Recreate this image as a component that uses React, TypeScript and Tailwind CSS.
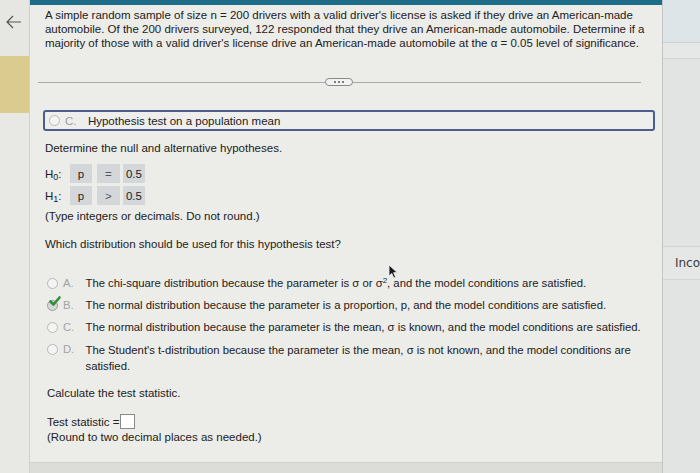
import React from "react";

const font = "font-['Liberation_Sans',Arial,sans-serif]";

const Radio = ({ checked = false }: { checked?: boolean }) => (
  <span className="relative inline-flex w-[11px] h-[11px] shrink-0">
    <span className={`w-[11px] h-[11px] rounded-full border ${checked ? "border-[#9a9a9a] bg-[#d8d8d8]" : "border-[#b9b9b9] bg-[#f4f4f2]"}`} />
    {checked && (
      <svg className="absolute -top-[4px] left-[2px]" width="12" height="11" viewBox="0 0 12 11">
        <path d="M1.5 5.5 L4.5 8.5 L10.5 1.5" fill="none" stroke="#2f8f3a" strokeWidth="2.6" strokeLinecap="round" strokeLinejoin="round" />
      </svg>
    )}
  </span>
);

const Option = ({ letter, checked, children }: { letter: string; checked?: boolean; children: React.ReactNode }) => (
  <div className="flex items-start gap-[5px] pl-[2px]">
    <div className="h-[14px] flex items-center">
      <Radio checked={checked} />
    </div>
    <span className="w-[18px] text-[#a3a3a3]">{letter}.</span>
    <div className="w-[570px]">{children}</div>
  </div>
);

const Cell = ({ children, w }: { children: React.ReactNode; w: string }) => (
  <span className={`${w} h-[19px] bg-[#d3d7da] flex items-center justify-center`}>{children}</span>
);

export default function App() {
  return (
    <div className={`w-[700px] h-[473px] flex overflow-hidden bg-[#e3e5e5] text-[#222] ${font}`}>
      {/* left rail */}
      <div className="w-[30px] flex flex-col border-r border-[#cfcfcc]">
        <div className="h-[56px] bg-[#e6e6e3] flex items-start justify-center pt-[14px]">
          <svg width="18" height="16" viewBox="0 0 18 16">
            <path d="M16 8 H2 M8 2 L2 8 L8 14" fill="none" stroke="#555" strokeWidth="1.2" />
          </svg>
        </div>
        <div className="h-[57px] bg-[#dccb8e]" />
        <div className="flex-1 bg-[#e8e8e5]" />
      </div>

      {/* main panel */}
      <div className="w-[632px] flex flex-col bg-[#ecece9] text-[11.5px] leading-[14px]">
        <div className="h-[5px] bg-[#1d6d89]" />
        <div className="flex-1 flex flex-col pl-[15px] pr-[20px]">
          <p className="mt-[3px] whitespace-nowrap text-[11.5px] leading-[14px]">
            A simple random sample of size n = 200 drivers with a valid driver's license is asked if they drive an American-made
            <br />
            automobile. Of the 200 drivers surveyed, 122 responded that they drive an American-made automobile. Determine if a
            <br />
            majority of those with a valid driver's license drive an American-made automobile at the α = 0.05 level of significance.
          </p>

          <div className="mt-[28px] -ml-[7px] w-[603px] flex items-center">
            <div className="flex-1 h-[1px] bg-[#a9a9a7]" />
            <span className="w-[28px] h-[8px] rounded-full border border-[#8a8a8a] bg-[#f2f2f0] flex items-center justify-center gap-[2px]">
              <span className="w-[2px] h-[2px] rounded-full bg-[#555]" />
              <span className="w-[2px] h-[2px] rounded-full bg-[#555]" />
              <span className="w-[2px] h-[2px] rounded-full bg-[#555]" />
            </span>
            <div className="flex-1 h-[1px] bg-[#a9a9a7]" />
          </div>

          <div className="mt-[24px] -ml-[2px] w-[612px] h-[21px] border-2 border-[#4b5e8e] rounded-[3px] flex items-center gap-[5px] pl-[4px] bg-[#eeeeec]">
            <Radio />
            <span className="w-[18px] text-[#9c9c9c]">C.</span>
            <span>Hypothesis test on a population mean</span>
          </div>

          <p className="mt-[10px]">Determine the null and alternative hypotheses.</p>

          <div className="mt-[9px] flex flex-col gap-[3px]">
            <div className="flex items-center">
              <span className="w-[25px]">H<sub className="text-[9px]">0</sub>:</span>
              <Cell w="w-[22px]">p</Cell>
              <span className="w-[5px]" />
              <Cell w="w-[23px]"><span className="text-[#555]">=</span></Cell>
              <span className="w-[3px]" />
              <Cell w="w-[22px]">0.5</Cell>
            </div>
            <div className="flex items-center">
              <span className="w-[25px]">H<sub className="text-[9px]">1</sub>:</span>
              <Cell w="w-[22px]">p</Cell>
              <span className="w-[5px]" />
              <Cell w="w-[23px]"><span className="text-[#555]">&gt;</span></Cell>
              <span className="w-[3px]" />
              <Cell w="w-[22px]">0.5</Cell>
            </div>
          </div>
          <p className="mt-[4px]">(Type integers or decimals. Do not round.)</p>

          <p className="mt-[14px]">Which distribution should be used for this hypothesis test?</p>

          <div className="mt-[25px] flex flex-col gap-[8px] text-[11.3px]">
            <Option letter="A">
              <span className="relative">
                The chi-square distribution because the parameter is σ or σ<sup className="text-[8px]">2</sup>, and the model conditions are satisfied.
                <svg className="absolute left-[303px] -top-[13px]" width="10" height="15" viewBox="0 0 10 15">
                  <path d="M1 1 L1 12 L3.8 9.4 L5.8 14 L7.6 13.2 L5.6 8.7 L9.2 8.6 Z" fill="#1a1a1a" stroke="#f2f2f2" strokeWidth="0.8" />
                </svg>
              </span>
            </Option>
            <Option letter="B" checked>
              The normal distribution because the parameter is a proportion, p, and the model conditions are satisfied.
            </Option>
            <Option letter="C">
              The normal distribution because the parameter is the mean, σ is known, and the model conditions are satisfied.
            </Option>
            <Option letter="D">
              <span className="leading-[16px]">
                The Student's t-distribution because the parameter is the mean, σ is not known, and the model conditions are
                <br />
                satisfied.
              </span>
            </Option>
          </div>

          <p className="mt-[12px] pl-[2px]">Calculate the test statistic.</p>
          <div className="mt-[14px] pl-[2px] flex items-center">
            <span>Test statistic =</span>
            <span className="ml-[1px] w-[15px] h-[15px] border border-[#8a8a8a] bg-white" />
          </div>
          <p className="mt-[1px] pl-[2px]">(Round to two decimal places as needed.)</p>
        </div>
        <div className="h-[11px] bg-[#dcdcd9] border-t border-[#d0d0cd]" />
      </div>

      {/* right area */}
      <div className="flex-1 flex flex-col border-l border-[#c4c6c6]">
        <div className="h-[42px] bg-[#dde5e8]" />
        <div className="h-[16px] border-t border-[#cfd2d2] bg-[#e6e8e8]" />
        <div className="h-[188px] border-t border-[#d2d5d5] bg-[#e2e4e4]" />
        <div className="h-[33px] border-t border-[#cfd2d2] bg-[#e5e7e7] flex items-center pl-[12px] text-[12px] text-[#3a3a3a] font-['DejaVu_Sans',sans-serif]">
          Inco
        </div>
        <div className="flex-1 border-t border-[#d2d5d5] bg-[#e2e4e4]" />
      </div>
    </div>
  );
}
